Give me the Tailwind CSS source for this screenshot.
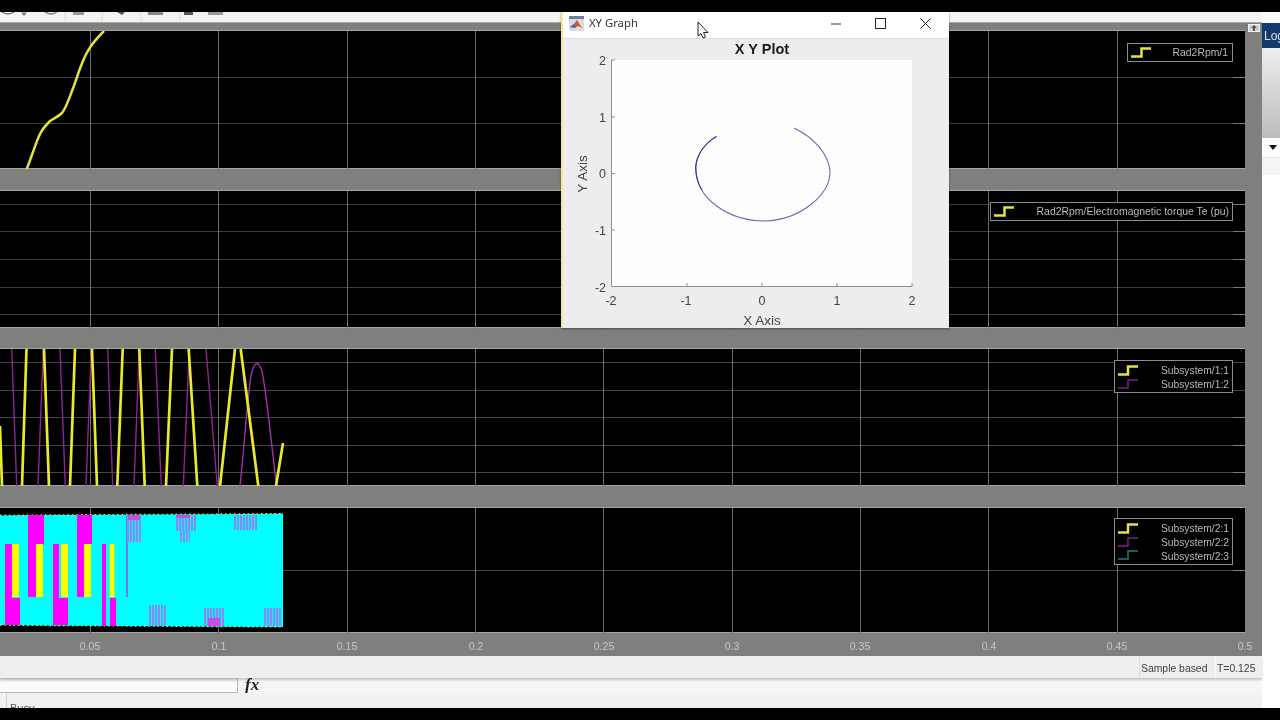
<!DOCTYPE html>
<html>
<head>
<meta charset="utf-8">
<script src="https://cdn.jsdelivr.net/npm/@tailwindcss/browser@4"></script>
</head>
<body class="bg-black overflow-hidden">
<div class="relative w-[1280px] h-[720px] bg-black flex flex-col font-['Liberation_Sans',Arial,sans-serif] blur-[0.6px]">
  <div class="h-[12px] shrink-0 bg-black"></div>
  <div class="h-[696px] shrink-0 flex bg-white overflow-hidden">
    <div class="w-[1262px] shrink-0 flex flex-col">
      <!-- toolbar strip -->
      <div class="h-[10px] shrink-0 bg-[#f3f3f1] flex items-start">
        <svg width="260" height="10" viewBox="0 12 260 10">
          <g fill="none" stroke="#777" stroke-width="1.5">
            <path d="M2 12 Q8 16 14 12M22 12l2 3 2-3M45 12 Q51 16 57 12"/>
          </g>
          <rect x="73" y="12" width="11" height="3" fill="#999"/>
          <path d="M117 12l5 3 3-3" fill="#555"/>
          <rect x="148" y="12" width="15" height="3" fill="#888"/>
          <rect x="184" y="12" width="9" height="3" fill="#555"/>
          <rect x="208" y="12" width="15" height="3" fill="#999"/>
          <path d="M65 12v10M102 12v10M141 12v10M180 12v10" stroke="#e0e0de"/>
        </svg>
      </div>
      <!-- scope -->
      <div class="h-[634px] shrink-0 bg-[#7f807e] border-t border-[#a9aaa7] flex flex-col pt-[7px] pr-[17px]">
        <!-- panel 1 -->
        <div class="relative h-[139px] shrink-0 bg-black border-y border-[#a3a4a1]">
          <svg class="absolute inset-0" width="1245" height="139" viewBox="0 30 1245 139">
            <g stroke="#3e3e3e"><path d="M0 76.5H1245M0 122.5H1245"/></g>
            <g stroke="#7a7a7a"><path d="M1233 76.5H1245M1233 122.5H1245"/></g>
            <g stroke="#6e6e6e"><path d="M90.5 29V168M218.5 29V168M347.5 29V168M475.5 29V168M603.5 29V168M732.5 29V168M860.5 29V168M988.5 29V168M1117.5 29V168"/></g>
            <path d="M26.7 168 C32 155 36 141 40 133 C43 127 46 124 50 120 C54 117 58 116 62 112 C66 107 69 98 72 90 C76 80 79 69 83 60 C86 52 89 48 91 45 C95 39 99 35 104 30" fill="none" stroke="#e4e43c" stroke-width="2.5"/>
          </svg>
          <div class="absolute right-[12px] top-[12px] w-[106px] h-[19px] bg-black border border-[#8d8d8d] flex items-center justify-between pl-[3px] pr-[4px]">
            <svg width="21" height="11" viewBox="0 0 21 11"><path d="M0 9.5H10.5V1.5H20" fill="none" stroke="#e4e43c" stroke-width="2.5"/></svg>
            <span class="text-[10.4px] text-[#b9b9b9]">Rad2Rpm/1</span>
          </div>
        </div>
        <div class="h-[21px] shrink-0"></div>
        <!-- panel 2 -->
        <div class="relative h-[138px] shrink-0 bg-black border-y border-[#a3a4a1]">
          <svg class="absolute inset-0" width="1245" height="138" viewBox="0 190 1245 138">
            <g stroke="#3e3e3e"><path d="M0 230.5H1245M0 258.5H1245M0 286.5H1245M0 313.5H1245M0 203.5H1245"/></g>
            <g stroke="#7a7a7a"><path d="M1233 230.5H1245M1233 258.5H1245M1233 286.5H1245M1233 313.5H1245M1233 203.5H1245"/></g>
            <g stroke="#6e6e6e"><path d="M90.5 190V328M218.5 190V328M347.5 190V328M475.5 190V328M603.5 190V328M732.5 190V328M860.5 190V328M988.5 190V328M1117.5 190V328"/></g>
          </svg>
          <div class="absolute right-[12px] top-[11px] w-[243px] h-[19px] bg-black border border-[#8d8d8d] flex items-center justify-between pl-[3px] pr-[3px]">
            <svg width="21" height="11" viewBox="0 0 21 11"><path d="M0 9.5H10.5V1.5H20" fill="none" stroke="#e4e43c" stroke-width="2.5"/></svg>
            <span class="text-[10.45px] text-[#b9b9b9]">Rad2Rpm/Electromagnetic torque Te (pu)</span>
          </div>
        </div>
        <div class="h-[20px] shrink-0"></div>
        <!-- panel 3 -->
        <div class="relative h-[138px] shrink-0 bg-black border-y border-[#a3a4a1]">
          <svg class="absolute inset-0" width="1245" height="138" viewBox="0 348 1245 138">
            <g stroke="#444"><path d="M0 361.5H1245M0 389.5H1245M0 416.5H1245M0 444.5H1245M0 471.5H1245"/></g>
            <g stroke="#7a7a7a"><path d="M1233 416.5H1245M1233 444.5H1245M1233 471.5H1245"/></g>
            <g stroke="#6e6e6e"><path d="M90.5 348V486M218.5 348V486M347.5 348V486M475.5 348V486M603.5 348V486M732.5 348V486M860.5 348V486M988.5 348V486M1117.5 348V486"/></g>
            <g fill="none" stroke="#8f2496" stroke-width="1.4">
              <path d="M11.7 348L16.7 485M38 485L43.3 348M60 348L65.3 485M86 485L91.3 348M107.7 348L112.7 485M134 485L139.3 348M155.3 348L161.3 485M183.3 485L189.3 348M206 348L217.3 485"/>
              <path d="M240 485C245 440 248 385 252 370Q257 355 262 370C267 395 272 450 276.7 485" stroke="#a02fa8"/>
            </g>
            <g fill="none" stroke="#e9e92e" stroke-width="2.7">
              <path d="M0 425L2 485M22 485L26.5 348M44 348L49 485M70 485L75 348M92 348L97 485M117.3 485L122.7 348M139.3 348L144.7 485M166 485L172 348M188.7 348L197.3 485M220 485L235 348M240.7 348L258.3 485M276 485L283 442"/>
            </g>
          </svg>
          <div class="absolute right-[12px] top-[11px] w-[119px] h-[33px] bg-black border border-[#8d8d8d] flex items-center justify-between pl-[3px] pr-[3px]">
            <div class="flex flex-col gap-[3px]">
              <svg class="block" width="20" height="11" viewBox="0 0 20 11"><path d="M0 9.5H10V1.5H20" fill="none" stroke="#e4e43c" stroke-width="2.5"/></svg>
              <svg class="block" width="20" height="10" viewBox="0 0 20 10"><path d="M0 9H10V1H20" fill="none" stroke="#7a2582" stroke-width="1.5"/></svg>
            </div>
            <div class="flex flex-col items-end pt-[2px] text-[10.3px] leading-[14px] text-[#b9b9b9]">
              <span>Subsystem/1:1</span><span>Subsystem/1:2</span>
            </div>
          </div>
        </div>
        <div class="h-[21px] shrink-0"></div>
        <!-- panel 4 -->
        <div class="relative h-[126px] shrink-0 bg-black border-y border-[#a3a4a1]">
          <svg class="absolute inset-0" width="1245" height="126" viewBox="0 507 1245 126">
            <g stroke="#444"><path d="M0 569.5H1245"/></g>
            <g stroke="#7a7a7a"><path d="M1233 569.5H1245"/></g>
            <g stroke="#6e6e6e"><path d="M90.5 507V633M218.5 507V633M347.5 507V633M475.5 507V633M603.5 507V633M732.5 507V633M860.5 507V633M988.5 507V633M1117.5 507V633"/></g>
            <path d="M0 514.5L30 514L60 514L90 513.8L120 513.7L160 513.5L200 513.3L240 513L283 512.6V626L240 625.8L200 625.6L160 625.3L120 625L80 624.8L40 624.4L0 624Z" fill="#00ffff"/>
            <g fill="none" stroke="#b8f07a" stroke-width="1.2" stroke-dasharray="1.5 3">
              <path d="M0 514.2L120 513.5L283 512.6M0 624.2L120 625L283 626"/>
            </g>
            <g fill="#ff00ff">
              <rect x="28" y="514" width="16" height="30"/><rect x="28" y="544" width="8" height="52"/>
              <rect x="77" y="514" width="15" height="29"/><rect x="77" y="543" width="7" height="53"/>
              <rect x="5" y="543" width="7" height="54"/><rect x="5" y="597" width="15" height="27"/>
              <rect x="53" y="543" width="6" height="81"/><rect x="59" y="597" width="9" height="27"/>
              <rect x="102" y="543" width="4" height="82"/><rect x="110" y="597" width="6" height="28"/>
            </g>
            <g fill="#ffff00">
              <rect x="36" y="543" width="7" height="53"/><rect x="84" y="543" width="7" height="53"/><rect x="12" y="543" width="7" height="53"/><rect x="61" y="543" width="7" height="53"/><rect x="109.5" y="543" width="5" height="53"/>
            </g>
            <rect x="126" y="514" width="2" height="82" fill="#7a74f0"/>
            <g fill="none" stroke="#8a88f4" stroke-dasharray="2 1">
              <path d="M127 527.5H142" stroke-width="27"/>
              <path d="M176 522H197" stroke-width="16"/><path d="M180 535.5H190" stroke-width="11"/>
              <path d="M234 521.5H257" stroke-width="15"/>
              <path d="M149 614.5H167" stroke-width="21"/>
              <path d="M204 616H225" stroke-width="18"/>
              <path d="M264 616H282" stroke-width="18"/>
            </g>
            <g fill="#c050e6"><rect x="128" y="514" width="12" height="5"/><rect x="176" y="514" width="14" height="3"/><rect x="208" y="617" width="12" height="8"/></g>
          </svg>
          <div class="absolute right-[12px] top-[10px] w-[119px] h-[47px] bg-black border border-[#8d8d8d] flex items-center justify-between pl-[3px] pr-[3px]">
            <div class="flex flex-col gap-[3px]">
              <svg class="block" width="20" height="11" viewBox="0 0 20 11"><path d="M0 9.5H10V1.5H20" fill="none" stroke="#e4e43c" stroke-width="2.5"/></svg>
              <svg class="block" width="20" height="10" viewBox="0 0 20 10"><path d="M0 9H10V1H20" fill="none" stroke="#7a2582" stroke-width="1.5"/></svg>
              <svg class="block" width="20" height="10" viewBox="0 0 20 10"><path d="M0 9H10V1H20" fill="none" stroke="#24787a" stroke-width="1.5"/></svg>
            </div>
            <div class="flex flex-col items-end pt-[3px] text-[10.3px] leading-[14px] text-[#b9b9b9]">
              <span>Subsystem/2:1</span><span>Subsystem/2:2</span><span>Subsystem/2:3</span>
            </div>
          </div>
        </div>
        <!-- x tick labels -->
        <svg class="block shrink-0" width="1262" height="23" viewBox="0 632 1262 23">
          <g font-size="10.5" fill="#c6c6c6" text-anchor="middle" font-family="Liberation Sans">
            <text x="90" y="649">0.05</text><text x="219" y="649">0.1</text><text x="347" y="649">0.15</text><text x="476" y="649">0.2</text><text x="604" y="649">0.25</text><text x="732" y="649">0.3</text><text x="860" y="649">0.35</text><text x="989" y="649">0.4</text><text x="1117" y="649">0.45</text><text x="1245" y="649">0.5</text>
          </g>
        </svg>
      </div>
      <!-- status bar -->
      <div class="h-[22px] shrink-0 bg-[#eeeeec] shadow-[0_2px_2px_rgba(0,0,0,0.2)] flex justify-end text-[10.4px] text-[#3e3e3e] z-10">
        <div class="w-[76px] border-l border-[#dcdcda] flex items-center pl-[1px] pt-[3px]">Sample based</div>
        <div class="w-[47px] border-l border-[#fafafa] flex items-center pl-[1px] pt-[3px]">T=0.125</div>
      </div>
      <!-- formula bar -->
      <div class="h-[15px] shrink-0 flex bg-[#f6f6f5]">
        <div class="w-[238px] h-[15px] bg-gradient-to-b from-[#e6e6e4] to-[#fbfbfa] to-40% border-b border-r border-[#b9bab7]"></div>
        <span class="ml-[7px] -mt-[2px] font-['Liberation_Serif',serif] italic font-bold text-[17px] leading-[18px] text-[#222]">fx</span>
      </div>
      <div class="h-[15px] shrink-0 bg-[#f1f1ef] flex">
        <div class="w-[7px] border-r border-[#d0d0ce]"></div>
        <span class="ml-[3px] mt-[9px] text-[11px] leading-[12px] text-[#555]">Busy</span>
      </div>
    </div>
    <!-- right side strip -->
    <div class="w-[18px] shrink-0 flex flex-col bg-white">
      <div class="h-[11px] shrink-0 bg-[#fafafa]"></div>
      <div class="h-[25px] shrink-0 bg-[#123a6c] pl-[2px] text-[12px] leading-[26px] text-[#d8e2ee] overflow-hidden">Log</div>
      <div class="h-[90px] shrink-0 bg-gradient-to-b from-[#eeeeee] to-[#bdbdbd]"></div>
      <div class="h-[20px] shrink-0 bg-white flex items-center justify-end pr-[3px] border-b border-[#e4e4e4]">
        <svg width="8" height="5" viewBox="0 0 8 5"><path d="M0 0H8L4 5Z" fill="#111"/></svg>
      </div>
      <div class="h-[17px] shrink-0 bg-[#f4f4f4]"></div>
    </div>
  </div>
  <div class="flex-1 bg-black"></div>

  <!-- scroll-up button overlay -->
  <div class="absolute left-[1248px] top-[24px] w-[12px] h-[8px] bg-[#d0d0d0] border border-[#f2f2f2] flex items-center justify-center">
    <svg width="6" height="6" viewBox="0 0 6 6"><path d="M3 0L6 3H4V6H2V3H0Z" fill="#555"/></svg>
  </div>

  <!-- XY Graph window -->
  <div class="absolute left-[561px] top-[12px] w-[388px] h-[316px] bg-[#ededed] border-l-2 border-[#eeea96] shadow-[0_1px_2px_rgba(0,0,0,0.4)] flex flex-col">
    <div class="h-[27px] shrink-0 bg-white border-b border-[#dcdcdc] flex items-center pl-[6px] pb-[3px]">
      <svg width="15" height="15" viewBox="0 0 15 15">
        <rect width="15" height="15" fill="#d6dbe4"/>
        <rect width="15" height="3" fill="#6f7f9a"/>
        <path d="M1 11L5 8 8 4 11 9 14 12 9 10 6 12Z" fill="#d4542a"/>
        <path d="M1 11L5 8 7 10 6 12Z" fill="#3f6ea8"/>
      </svg>
      <span class="ml-[5px] font-['Noto_Sans',sans-serif] text-[11.3px] text-[#333]">XY Graph</span>
      <div class="ml-auto flex items-center">
        <svg class="mr-[34px]" width="10" height="2" viewBox="0 0 10 2"><path d="M0 1H10" stroke="#333"/></svg>
        <svg class="mr-[34px]" width="11" height="11" viewBox="0 0 11 11"><rect x=".5" y=".5" width="10" height="10" fill="none" stroke="#222"/></svg>
        <svg class="mr-[18px]" width="11" height="11" viewBox="0 0 11 11"><path d="M.5 .5L10.5 10.5M10.5 .5L.5 10.5" stroke="#222"/></svg>
      </div>
    </div>
    <svg class="block" width="386" height="288" viewBox="563 39 386 288">
      <rect x="612" y="60" width="300" height="227" fill="#fdfdfd"/>
      <path d="M612 60H611.5V286.5H912V283M687 286.5V283M762 286.5V283M837 286.5V283M611.5 60H615M611.5 117H615M611.5 173.5H615M611.5 230H615" fill="none" stroke="#8f8f8f"/>
      <path d="M716.5 136.5C705 143 696 155 695.7 168C696 200 730 221 765 221C800 220 830 195 830 172C829 155 815 138 794 128" fill="none" stroke="#6a6ab4" stroke-width="1.1"/>
      <path d="M716.5 136.5C705 143 696 155 695.7 168C696 176 698 184 702 190" fill="none" stroke="#2b2b8a" stroke-width="1"/>
      <g font-family="Liberation Sans" font-size="12.5" fill="#444">
        <text x="762" y="54" text-anchor="middle" font-weight="bold" font-size="14.5" fill="#1c1c1c">X Y Plot</text>
        <g text-anchor="end">
          <text x="606" y="65">2</text><text x="606" y="122">1</text><text x="606" y="178">0</text><text x="606" y="235">-1</text><text x="606" y="292">-2</text>
        </g>
        <g text-anchor="middle">
          <text x="611" y="305">-2</text><text x="686" y="305">-1</text><text x="762" y="305">0</text><text x="837" y="305">1</text><text x="912" y="305">2</text>
          <text x="762" y="325" font-size="13.5">X Axis</text>
          <text transform="translate(587 174) rotate(-90)" font-size="13.5">Y Axis</text>
        </g>
      </g>
    </svg>
  </div>

  <!-- mouse cursor -->
  <svg class="absolute left-[697px] top-[21px]" width="13" height="18" viewBox="0 0 13 18">
    <path d="M1 1V15L4 12.5 6 17 8.5 16 6.5 11.5H11Z" fill="#fff" stroke="#222" stroke-width="1"/>
  </svg>
</div>
</body>
</html>
